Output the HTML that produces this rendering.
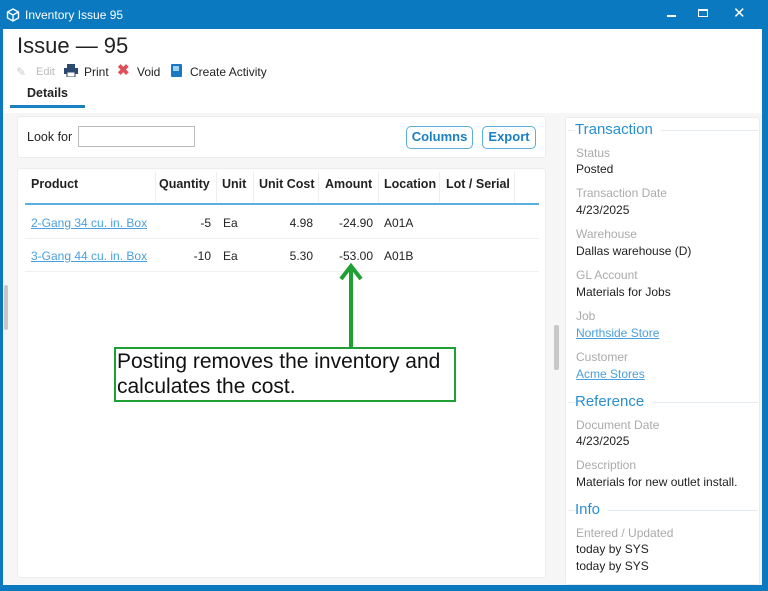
<!DOCTYPE html>
<html><head><style>
*{box-sizing:border-box;margin:0;padding:0}
body{width:768px;height:591px;overflow:hidden;background:#0a79c0;font-family:"Liberation Sans",sans-serif;font-size:12px;color:#222;position:relative}
.abs{position:absolute}
.win{position:absolute;left:3px;top:29px;width:759px;height:556px;background:#f6f6f6}
.card{position:absolute;background:#fff;border:1px solid #ececec;border-radius:3px}
.btn{position:absolute;border:1.5px solid #5aaee0;border-radius:5px;color:#1a7fc4;font-weight:bold;font-size:13px;text-align:center;line-height:20px;background:#fff}
.th{position:absolute;top:177px;font-weight:bold;font-size:12.5px}
.td{position:absolute;font-size:12px}
.lnk{color:#4aa0dc !important;text-decoration:underline}
.lbl{position:absolute;left:576px;color:#aaa;font-size:12px}
.val{position:absolute;left:576px;font-size:12px;color:#222}
.sec{position:absolute;left:575px;color:#2a8fd0;font-size:15px;background:#fff;padding-right:8px}
.sline{position:absolute;left:568px;width:190px;height:1px;background:#e4ecf2}
.vd{position:absolute;top:172px;width:1px;height:30px;background:#eee}
</style></head><body>
<svg class="abs" style="left:6px;top:8px" width="14" height="14" viewBox="0 0 14 14" fill="none" stroke="#fff" stroke-width="1.4"><path d="M7 1L12.5 4V10L7 13L1.5 10V4Z"/><path d="M1.5 4L7 7L12.5 4M7 7V13"/></svg>
<div class="abs" style="left:25px;top:8px;color:#fff;font-size:12px">Inventory Issue 95</div>
<div class="abs" style="left:667px;top:15px;width:9px;height:2px;background:#fff"></div>
<div class="abs" style="left:698px;top:9px;width:10px;height:8px;border:1.5px solid #fff;border-top-width:2.5px"></div>
<div class="abs" style="left:733px;top:4px;color:#fff;font-size:15px">✕</div>
<div class="win"></div>
<div class="abs" style="left:3px;top:29px;width:759px;height:84px;background:#fff"></div>
<div class="abs" style="left:17px;top:33px;font-size:22px;color:#222">Issue — 95</div>
<div class="abs" style="left:16px;top:65px;color:#ccc;font-size:12px">✎</div>
<div class="abs" style="left:36px;top:66px;color:#bbb;font-size:11px">Edit</div>
<svg class="abs" style="left:64px;top:64px" width="14" height="13" viewBox="0 0 14 13"><rect x="3" y="0" width="8" height="4" fill="#2c4a70"/><rect x="0" y="4" width="14" height="6" fill="#2c4a70"/><rect x="3" y="8" width="8" height="5" fill="#fff" stroke="#2c4a70"/></svg>
<div class="abs" style="left:84px;top:65px;font-size:12px">Print</div>
<div class="abs" style="left:117px;top:61px;color:#e0505a;font-size:15px;font-weight:bold">✖</div>
<div class="abs" style="left:137px;top:65px;font-size:12px">Void</div>
<div class="abs" style="left:171px;top:64px;width:11px;height:13px;background:#1a78c2;border-radius:1px"><div style="margin:2px 2px;width:6px;height:5px;background:#9fd0f0"></div></div>
<div class="abs" style="left:190px;top:65px;font-size:12px">Create Activity</div>
<div class="abs" style="left:27px;top:86px;font-weight:bold;font-size:12.5px">Details</div>
<div class="abs" style="left:10px;top:105px;width:75px;height:3px;background:#1a7fc4"></div>

<div class="card" style="left:17px;top:116px;width:529px;height:42px"></div>
<div class="abs" style="left:27px;top:130px;font-size:12.5px">Look for</div>
<div class="abs" style="left:78px;top:126px;width:117px;height:21px;border:1px solid #bbb;background:#fff"></div>
<div class="btn" style="left:406px;top:126px;width:67px;height:23px">Columns</div>
<div class="btn" style="left:482px;top:126px;width:54px;height:23px">Export</div>

<div class="card" style="left:17px;top:168px;width:529px;height:410px"></div>
<div class="th" style="left:31px">Product</div>
<div class="th" style="left:159px">Quantity</div>
<div class="th" style="left:222px">Unit</div>
<div class="th" style="left:259px">Unit Cost</div>
<div class="th" style="left:325px">Amount</div>
<div class="th" style="left:384px">Location</div>
<div class="th" style="left:446px">Lot / Serial</div>
<div class="vd" style="left:155px"></div><div class="vd" style="left:216px"></div><div class="vd" style="left:253px"></div><div class="vd" style="left:318px"></div><div class="vd" style="left:378px"></div><div class="vd" style="left:439px"></div><div class="vd" style="left:514px"></div>
<div class="abs" style="left:25px;top:203px;width:514px;height:2px;background:#5aaee0"></div>
<div class="td lnk" style="left:31px;top:216px">2-Gang 34 cu. in. Box</div>
<div class="td" style="left:160px;top:216px;width:51px;text-align:right">-5</div>
<div class="td" style="left:223px;top:216px">Ea</div>
<div class="td" style="left:260px;top:216px;width:53px;text-align:right">4.98</div>
<div class="td" style="left:320px;top:216px;width:53px;text-align:right">-24.90</div>
<div class="td" style="left:384px;top:216px">A01A</div>
<div class="abs" style="left:25px;top:238px;width:514px;height:1px;background:#f0f0f0"></div>
<div class="td lnk" style="left:31px;top:249px">3-Gang 44 cu. in. Box</div>
<div class="td" style="left:160px;top:249px;width:51px;text-align:right">-10</div>
<div class="td" style="left:223px;top:249px">Ea</div>
<div class="td" style="left:260px;top:249px;width:53px;text-align:right">5.30</div>
<div class="td" style="left:320px;top:249px;width:53px;text-align:right">-53.00</div>
<div class="td" style="left:384px;top:249px">A01B</div>
<div class="abs" style="left:25px;top:271px;width:514px;height:1px;background:#f0f0f0"></div>

<svg class="abs" style="left:338px;top:262px" width="26" height="88" viewBox="0 0 26 88"><path d="M13 87V4" stroke="#1ea032" stroke-width="4"/><path d="M3 17L13 4L23 17" stroke="#1ea032" stroke-width="4" fill="none"/></svg>
<div class="abs" style="left:114px;top:347px;width:342px;height:55px;border:2px solid #1ea032;background:#fff;font-size:21px;line-height:25px;padding:0 0 0 1px;color:#111;white-space:nowrap">Posting removes the inventory and<br>calculates the cost.</div>

<div class="abs" style="left:4px;top:285px;width:4px;height:45px;background:#c8c8c8;border-radius:2px"></div>
<div class="abs" style="left:554px;top:325px;width:5px;height:45px;background:#c8c8c8;border-radius:2px"></div>

<div class="card" style="left:565px;top:117px;width:195px;height:468px"></div>
<div class="sline" style="top:130px"></div><div class="sec" style="top:121px">Transaction</div>
<div class="lbl" style="top:146px">Status</div><div class="val" style="top:162px">Posted</div>
<div class="lbl" style="top:186px">Transaction Date</div><div class="val" style="top:203px">4/23/2025</div>
<div class="lbl" style="top:227px">Warehouse</div><div class="val" style="top:244px">Dallas warehouse (D)</div>
<div class="lbl" style="top:268px">GL Account</div><div class="val" style="top:285px">Materials for Jobs</div>
<div class="lbl" style="top:309px">Job</div><div class="val lnk" style="top:326px">Northside Store</div>
<div class="lbl" style="top:350px">Customer</div><div class="val lnk" style="top:367px">Acme Stores</div>
<div class="sline" style="top:402px"></div><div class="sec" style="top:393px">Reference</div>
<div class="lbl" style="top:418px">Document Date</div><div class="val" style="top:434px">4/23/2025</div>
<div class="lbl" style="top:458px">Description</div><div class="val" style="top:475px">Materials for new outlet install.</div>
<div class="sline" style="top:510px"></div><div class="sec" style="top:501px">Info</div>
<div class="lbl" style="top:526px">Entered / Updated</div><div class="val" style="top:542px">today by SYS</div><div class="val" style="top:559px">today by SYS</div>
</body></html>
